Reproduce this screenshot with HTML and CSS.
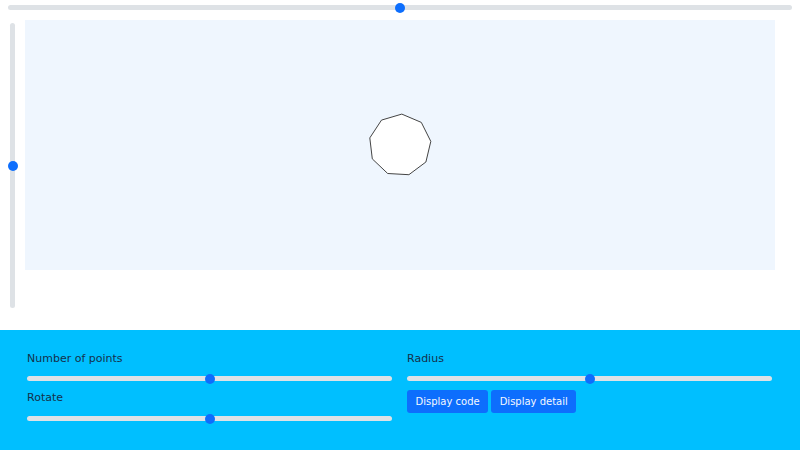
FILE: index.html
```html
<!DOCTYPE html>
<html lang="en">
<head>
<meta charset="utf-8">
<title>Polygon</title>
<link rel="stylesheet" href="styles.css">
</head>
<body>
<div class="stage">
  <div class="hslider top-slider"><span class="thumb" style="left:50%"></span></div>
  <div class="main">
    <div class="vslider"><span class="thumb" style="top:50%"></span></div>
    <div class="canvas">
      <svg class="shape" width="750" height="250" viewBox="0 0 750 250">
        <polygon points="376.8,94.1 396.3,102.4 405.8,121.4 400.9,142.0 383.9,154.7 362.7,153.5 347.3,138.9 344.8,117.9 356.5,100.1" fill="#fff" stroke="#444" stroke-width="1"/>
      </svg>
    </div>
  </div>
</div>
<div class="panel">
  <div class="col">
    <div class="label">Number of points</div>
    <div class="hslider ctrl"><span class="thumb" style="left:50%"></span></div>
    <div class="label second">Rotate</div>
    <div class="hslider ctrl last"><span class="thumb" style="left:50%"></span></div>
  </div>
  <div class="col">
    <div class="label">Radius</div>
    <div class="hslider ctrl"><span class="thumb" style="left:50%"></span></div>
    <div class="buttons">
      <button class="btn">Display code</button>
      <button class="btn">Display detail</button>
    </div>
  </div>
</div>
</body>
</html>
```
FILE: styles.css
```css
html, body {
  margin: 0;
  padding: 0;
  background: #fff;
  font-family: "DejaVu Sans", sans-serif;
}
.stage {
  height: 330px;
  padding: 5px 8px 0;
  box-sizing: border-box;
}
.hslider {
  position: relative;
  height: 5px;
  background: #dee2e6;
  border-radius: 3px;
}
.vslider {
  position: relative;
  width: 5px;
  height: 285px;
  margin: 3px 0 0 2px;
  background: #dee2e6;
  border-radius: 3px;
}
.thumb {
  position: absolute;
  width: 10px;
  height: 10px;
  border-radius: 50%;
  background: #0d6efd;
}
.hslider .thumb {
  top: -2.5px;
  margin-left: -5px;
}
.vslider .thumb {
  left: -2.5px;
  margin-top: -5px;
}
.main {
  display: flex;
  margin-top: 10px;
}
.canvas {
  width: 750px;
  height: 250px;
  margin-left: 10px;
  background: #eff6fe;
}
.shape {
  display: block;
}
.panel {
  height: 120px;
  background: #00bfff;
  display: grid;
  grid-template-columns: 365px 365px;
  column-gap: 15px;
  padding: 22px 27px 0;
  box-sizing: border-box;
}
.label {
  font-size: 11px;
  line-height: 14px;
  color: #15304a;
}
.ctrl {
  margin-top: 10px;
}
.label.second {
  margin-top: 10px;
}
.ctrl.last {
  margin-top: 11px;
}
.buttons {
  display: flex;
  gap: 3px;
  margin-top: 9px;
}
.btn {
  height: 23px;
  padding: 0 8.5px;
  border: none;
  border-radius: 3px;
  background: #0d6efd;
  color: #f4f8ff;
  font-family: "DejaVu Sans", sans-serif;
  font-size: 10px;
  line-height: 23px;
}
```
